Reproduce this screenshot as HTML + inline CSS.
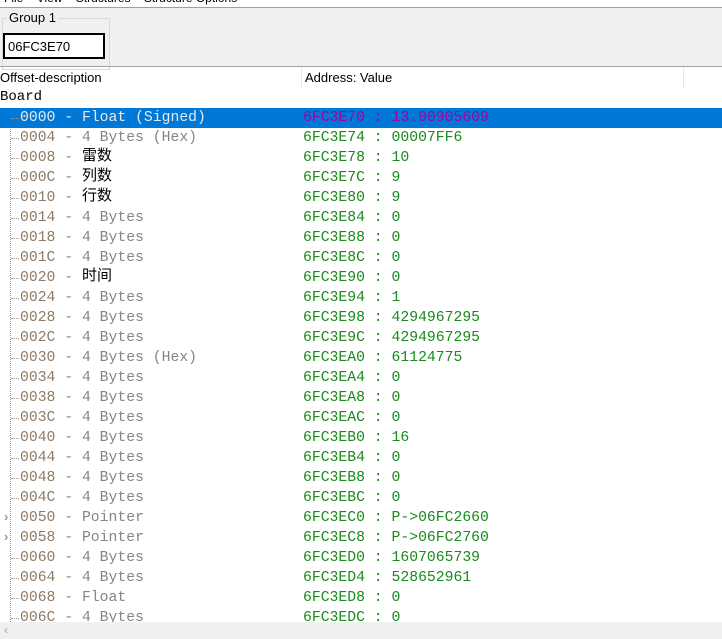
<!DOCTYPE html>
<html><head><meta charset="utf-8"><style>
*{margin:0;padding:0;box-sizing:border-box}
body{width:722px;height:639px;overflow:hidden;background:#fff;position:relative;font-family:"Liberation Sans","Noto Sans CJK SC",sans-serif}
.menu{position:absolute;top:-9px;left:4px;font-size:12px;color:#000;white-space:pre}
.panel{position:absolute;top:7px;left:0;width:722px;height:59px;background:#f0f0f0;border-top:1px solid #a0a0a0}
.gb{position:absolute;left:2px;top:10px;width:108px;height:52px;border:1px solid #d8d8d8}
.gbl{position:absolute;left:4px;top:-9px;background:#f0f0f0;padding:0 2px;font-size:13px;color:#000}
.inp{position:absolute;left:3px;top:25px;width:102px;height:26px;border:2px solid #000;background:#fff;font-size:13px;padding:4px 3px}
.hdr{position:absolute;top:66px;left:0;width:722px;height:22px;border-top:1px solid #a0a0a0;font-size:13px}
.hdr span{position:absolute;top:3px}
.sep{position:absolute;top:0;width:1px;height:21px;background:#e5e5e5}
.row{position:absolute;left:0;width:722px;height:20px;font-family:"Liberation Mono","Noto Sans CJK SC",monospace;font-size:14.75px;line-height:20px;white-space:pre}
.row .o{position:absolute;left:20px;color:#858585}
.row .o b{font-weight:normal;color:#8c7a66}
.row .o i{font-style:normal;color:#000;font-family:"Noto Sans CJK SC",sans-serif;font-size:15px;display:inline-block;line-height:20px;vertical-align:top;margin-top:-3px}
.row .a{position:absolute;left:303px;color:#1a8a1a}
.sel{background:#0078d7}
.sel .o,.sel .o b{color:#e8e8e8}
.sel .a{color:#a000a0}
.dots{position:absolute;left:10px;top:108px;width:0;height:514px;border-left:1px dotted #999}
.h{position:absolute;left:11px;width:8px;border-top:1px dotted #999}
.scroll{position:absolute;left:0;top:622px;width:722px;height:17px;background:#f0f0f0;color:#a0a0a0;font-size:12px;padding-left:4px;line-height:17px}
.arr{position:absolute;left:4px;color:#999;font-size:13px;font-weight:bold}
</style></head><body>
<div class="menu">File    View    Structures    Structure Options</div>
<div class="panel">
 <div class="gb"><div class="gbl">Group 1</div></div>
 <div class="inp">06FC3E70</div>
</div>
<div class="hdr"><span style="left:0">Offset-description</span><div class="sep" style="left:301px"></div><span style="left:305px">Address: Value</span><div class="sep" style="left:683px"></div></div>
<div class="row" style="top:87px;font-size:14px"><span style="position:absolute;left:0;color:#000">Board</span></div>
<div class="dots"></div>
<div id="rows"></div>
<script>
var d=[["0000","Float (Signed)","6FC3E70 : 13.00905609"],["0004","4 Bytes (Hex)","6FC3E74 : 00007FF6"],["0008","*雷数","6FC3E78 : 10"],["000C","*列数","6FC3E7C : 9"],["0010","*行数","6FC3E80 : 9"],["0014","4 Bytes","6FC3E84 : 0"],["0018","4 Bytes","6FC3E88 : 0"],["001C","4 Bytes","6FC3E8C : 0"],["0020","*时间","6FC3E90 : 0"],["0024","4 Bytes","6FC3E94 : 1"],["0028","4 Bytes","6FC3E98 : 4294967295"],["002C","4 Bytes","6FC3E9C : 4294967295"],["0030","4 Bytes (Hex)","6FC3EA0 : 61124775"],["0034","4 Bytes","6FC3EA4 : 0"],["0038","4 Bytes","6FC3EA8 : 0"],["003C","4 Bytes","6FC3EAC : 0"],["0040","4 Bytes","6FC3EB0 : 16"],["0044","4 Bytes","6FC3EB4 : 0"],["0048","4 Bytes","6FC3EB8 : 0"],["004C","4 Bytes","6FC3EBC : 0"],["0050","Pointer","6FC3EC0 : P->06FC2660"],["0058","Pointer","6FC3EC8 : P->06FC2760"],["0060","4 Bytes","6FC3ED0 : 1607065739"],["0064","4 Bytes","6FC3ED4 : 528652961"],["0068","Float","6FC3ED8 : 0"],["006C","4 Bytes","6FC3EDC : 0"]];
var h="";
d.forEach(function(r,i){var t=108+20*i;var desc=r[1][0]=="*"?"<i>"+r[1].slice(1)+"</i>":r[1];
h+='<div class="row'+(i==0?' sel':'')+'" style="top:'+t+'px"><span class="o"><b>'+r[0]+'</b> - '+desc+'</span><span class="a">'+r[2]+'</span></div>';
if(r[1]=="Pointer")h+='<div class="arr" style="top:'+(t+1)+'px">›</div>';else h+='<div class="h" style="top:'+(t+10)+'px"></div>';});
document.getElementById("rows").innerHTML=h;
</script>
<div class="scroll">‹</div>
</body></html>
